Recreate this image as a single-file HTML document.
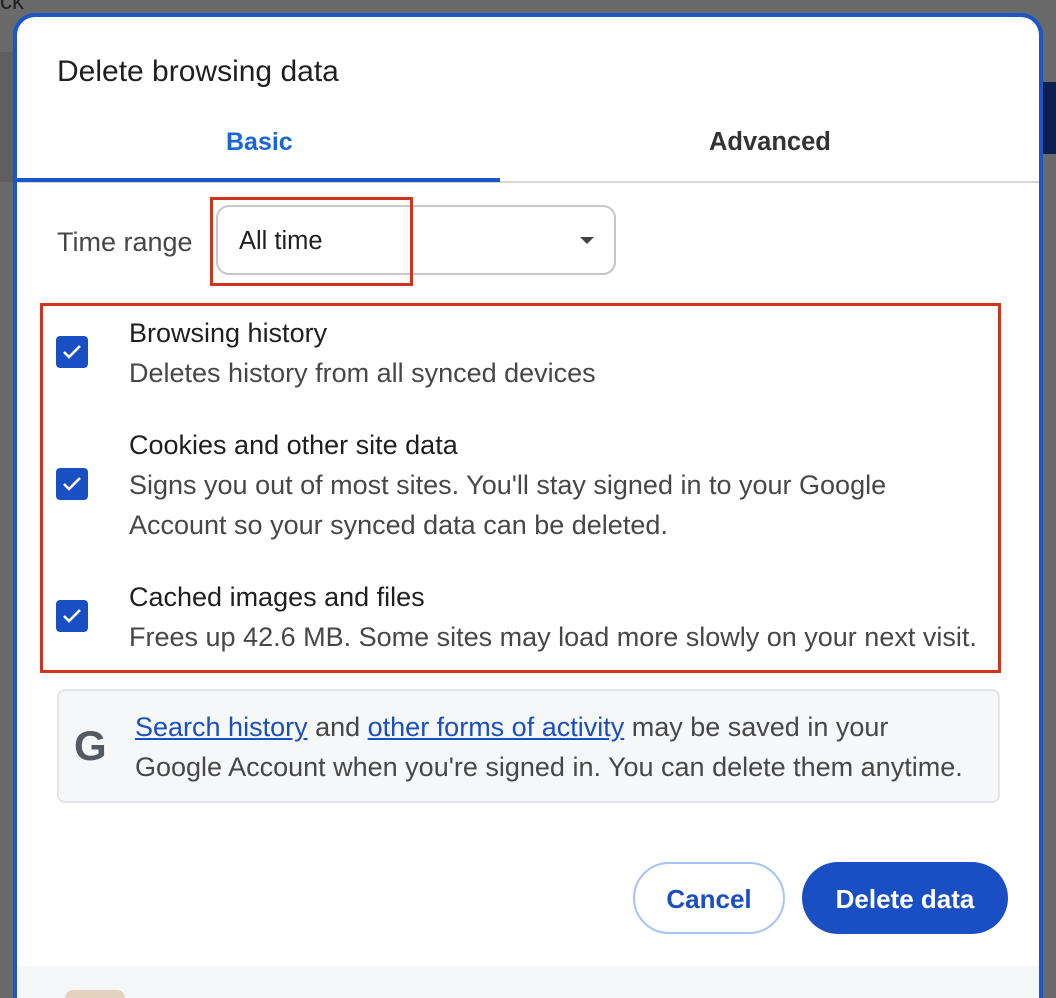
<!DOCTYPE html>
<html><head><meta charset="utf-8"><style>
*{box-sizing:border-box;margin:0;padding:0}
html,body{width:1056px;height:998px;overflow:hidden}
body{background:#6a6a6a;font-family:"Liberation Sans",Arial,sans-serif;position:relative;color:#1f1f1f}
.abs{position:absolute}
.dlg{position:absolute;left:13px;top:13px;width:1030px;height:985px;border:4px solid #1a56c8;border-bottom:none;border-radius:22px 22px 0 0;background:#fff;overflow:hidden}
.t{position:absolute;white-space:nowrap}
.cb{position:absolute;left:56px;width:32px;height:32px;background:#1a4fc4;border-radius:4px}
.cb svg{position:absolute;left:6px;top:7px}
.grey{color:#474747}
.b{font-size:27px}
a{color:#1a4fc4;text-decoration:underline}
</style></head><body>
<div class="t" style="left:0;top:-12px;font-size:24px;color:#222">ck</div>
<div class="abs" style="left:0;top:52px;width:13px;height:130px;background:#5f5f5f"></div>
<div class="abs" style="left:1043px;top:82px;width:13px;height:72px;background:#0c1f4e"></div>
<div class="dlg"></div>
<div class="t" style="left:57px;top:55px;font-size:30px;color:#1f1f1f">Delete browsing data</div>
<div class="t" style="left:226px;top:128px;font-size:25px;color:#1a66d6;font-weight:bold">Basic</div>
<div class="t" style="left:709px;top:128px;font-size:25.5px;color:#333;font-weight:bold">Advanced</div>
<div class="abs" style="left:17px;top:181px;width:1022px;height:2px;background:#d6d6da"></div>
<div class="abs" style="left:17px;top:178px;width:483px;height:4px;background:#1a56c8"></div>
<div class="t grey b" style="left:57px;top:227px">Time range</div>
<div class="abs" style="left:216px;top:205px;width:400px;height:70px;border:2px solid #c7c7c7;border-radius:13px"></div>
<div class="t" style="left:239px;top:227px;font-size:25.5px;color:#1f1f1f">All time</div>
<div class="abs" style="left:580px;top:237px;width:0;height:0;border-left:7px solid transparent;border-right:7px solid transparent;border-top:7px solid #444"></div>
<div class="abs" style="left:210px;top:197px;width:203px;height:89px;border:3px solid #d0341c"></div>
<div class="abs" style="left:40px;top:303px;width:961px;height:370px;border:3px solid #d0341c"></div>
<div class="cb" style="top:336px"><svg width="20" height="18" viewBox="0 0 20 18"><path d="M2 9l5 5L18 3" fill="none" stroke="#fff" stroke-width="2.6"/></svg></div>
<div class="cb" style="top:468px"><svg width="20" height="18" viewBox="0 0 20 18"><path d="M2 9l5 5L18 3" fill="none" stroke="#fff" stroke-width="2.6"/></svg></div>
<div class="cb" style="top:600px"><svg width="20" height="18" viewBox="0 0 20 18"><path d="M2 9l5 5L18 3" fill="none" stroke="#fff" stroke-width="2.6"/></svg></div>
<div class="t b" style="left:129px;top:318px">Browsing history</div>
<div class="t grey b" style="left:129px;top:358px">Deletes history from all synced devices</div>
<div class="t b" style="left:129px;top:430px">Cookies and other site data</div>
<div class="t grey b" style="left:129px;top:470px">Signs you out of most sites. You'll stay signed in to your Google</div>
<div class="t grey b" style="left:129px;top:510px">Account so your synced data can be deleted.</div>
<div class="t b" style="left:129px;top:582px">Cached images and files</div>
<div class="t grey b" style="left:129px;top:622px">Frees up 42.6 MB. Some sites may load more slowly on your next visit.</div>
<div class="abs" style="left:57px;top:689px;width:943px;height:114px;background:#f6f7f9;border:2px solid #e4e5e8;border-radius:8px"></div>
<div class="t" style="left:74px;top:722px;font-size:42px;font-weight:bold;color:#555a60">G</div>
<div class="t grey b" style="left:135px;top:712px"><a>Search history</a> and <a>other forms of activity</a> may be saved in your</div>
<div class="t grey b" style="left:135px;top:752px">Google Account when you're signed in. You can delete them anytime.</div>
<div class="abs" style="left:633px;top:862px;width:152px;height:72px;border:2px solid #a8c3f2;border-radius:36px;text-align:center;line-height:70px;font-size:26px;font-weight:bold;color:#1a4fc4">Cancel</div>
<div class="abs" style="left:802px;top:862px;width:206px;height:72px;background:#1a4fc4;border-radius:36px;text-align:center;line-height:74px;font-size:26px;font-weight:bold;color:#fff">Delete data</div>
<div class="abs" style="left:17px;top:966px;width:1022px;height:32px;background:#f5f6f8"></div>
<div class="abs" style="left:65px;top:990px;width:60px;height:8px;border-radius:30px 30px 0 0;background:#e2d2bd"></div>
</body></html>
